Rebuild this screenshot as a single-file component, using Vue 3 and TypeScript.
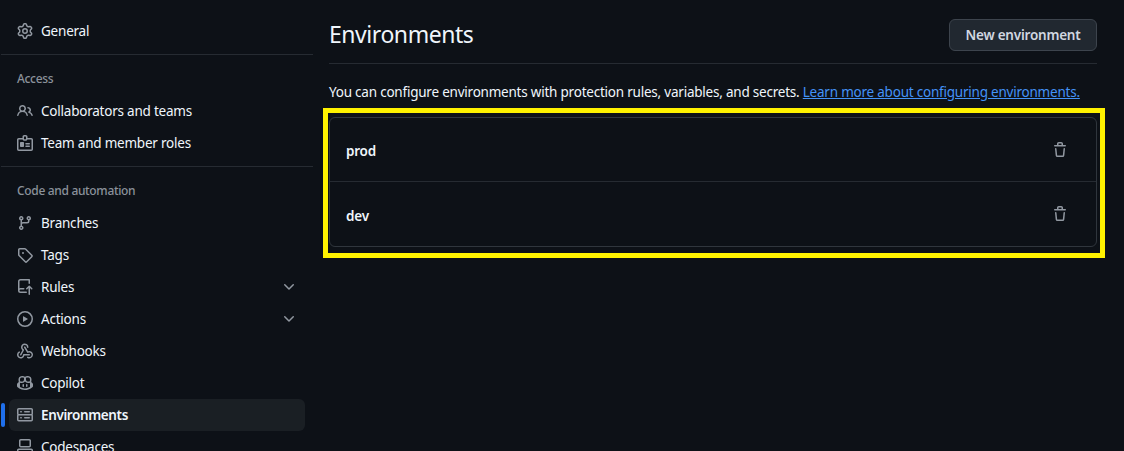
<script setup lang="ts">
interface NavItem {
  label: string;
  icon: string[];
  active?: boolean;
  expandable?: boolean;
}

const chevronDown =
  'M12.78 5.22a.749.749 0 0 1 0 1.06l-4.25 4.25a.749.749 0 0 1-1.06 0L3.22 6.28a.749.749 0 1 1 1.06-1.06L8 8.939l3.72-3.719a.749.749 0 0 1 1.06 0Z';
const trash =
  'M11 1.75V3h2.25a.75.75 0 0 1 0 1.5H2.75a.75.75 0 0 1 0-1.5H5V1.75C5 .784 5.784 0 6.75 0h2.5C10.216 0 11 .784 11 1.75ZM4.496 6.675l.66 6.6a.25.25 0 0 0 .249.225h5.19a.25.25 0 0 0 .249-.225l.66-6.6a.75.75 0 0 1 1.492.149l-.66 6.6A1.748 1.748 0 0 1 10.595 15h-5.19a1.75 1.75 0 0 1-1.741-1.575l-.66-6.6a.75.75 0 1 1 1.492-.15ZM6.5 1.75V3h3V1.75a.25.25 0 0 0-.25-.25h-2.5a.25.25 0 0 0-.25.25Z';

const general: NavItem = {
  label: 'General',
  icon: [
    'M8 0a8.2 8.2 0 0 1 .701.031C9.444.095 9.99.645 10.16 1.29l.288 1.107c.018.066.079.158.212.224.231.114.454.243.668.386.123.082.233.09.299.071l1.103-.303c.644-.176 1.392.021 1.82.63.27.385.506.792.704 1.218.315.675.111 1.422-.364 1.891l-.814.806c-.049.048-.098.147-.088.294.016.257.016.515 0 .772-.01.147.038.246.088.294l.814.806c.475.469.679 1.216.364 1.891a7.977 7.977 0 0 1-.704 1.217c-.428.61-1.176.807-1.82.63l-1.102-.302c-.067-.019-.177-.011-.3.071a5.909 5.909 0 0 1-.668.386c-.133.066-.194.158-.211.224l-.29 1.106c-.168.646-.715 1.196-1.458 1.26a8.006 8.006 0 0 1-1.402 0c-.743-.064-1.289-.614-1.458-1.26l-.289-1.106c-.018-.066-.079-.158-.212-.224a5.738 5.738 0 0 1-.668-.386c-.123-.082-.233-.09-.299-.071l-1.103.303c-.644.176-1.392-.021-1.82-.63a8.12 8.12 0 0 1-.704-1.218c-.315-.675-.111-1.422.363-1.891l.815-.806c.05-.048.098-.147.088-.294a6.214 6.214 0 0 1 0-.772c.01-.147-.038-.246-.088-.294l-.815-.806C.635 6.045.431 5.298.746 4.623a7.92 7.92 0 0 1 .704-1.217c.428-.61 1.176-.807 1.82-.63l1.102.302c.067.019.177.011.3-.071.214-.143.437-.272.668-.386.133-.066.194-.158.211-.224l.29-1.106C6.009.645 6.556.095 7.299.03 7.53.01 7.764 0 8 0Zm-.571 1.525c-.036.003-.108.036-.137.146l-.289 1.105c-.147.561-.549.967-.998 1.189-.173.086-.34.183-.5.29-.417.278-.97.423-1.529.27l-1.103-.303c-.109-.03-.175.016-.195.045-.22.312-.412.644-.573.99-.014.031-.021.11.059.19l.815.806c.411.406.562.957.53 1.456a4.709 4.709 0 0 0 0 .582c.032.499-.119 1.05-.53 1.456l-.815.806c-.081.08-.073.159-.059.19.162.346.353.677.573.989.02.03.085.076.195.046l1.102-.303c.56-.153 1.113-.008 1.53.27.161.107.328.204.501.29.447.222.85.629.997 1.189l.289 1.105c.029.109.101.143.137.146a6.6 6.6 0 0 0 1.142 0c.036-.003.108-.036.137-.146l.289-1.105c.147-.561.549-.967.998-1.189.173-.086.34-.183.5-.29.417-.278.97-.423 1.529-.27l1.103.303c.109.029.175-.016.195-.045.22-.313.411-.644.573-.99.014-.031.021-.11-.059-.19l-.815-.806c-.411-.406-.562-.957-.53-1.456a4.709 4.709 0 0 0 0-.582c-.032-.499.119-1.05.53-1.456l.815-.806c.081-.08.073-.159.059-.19a6.464 6.464 0 0 0-.573-.989c-.02-.03-.085-.076-.195-.046l-1.102.303c-.56.153-1.113.008-1.53-.27a4.44 4.44 0 0 0-.501-.29c-.447-.222-.85-.629-.997-1.189l-.289-1.105c-.029-.11-.101-.143-.137-.146a6.6 6.6 0 0 0-1.142 0ZM11 8a3 3 0 1 1-6 0 3 3 0 0 1 6 0ZM9.5 8a1.5 1.5 0 1 0-3.001.001A1.5 1.5 0 0 0 9.5 8Z',
  ],
};

const accessItems: NavItem[] = [
  {
    label: 'Collaborators and teams',
    icon: [
      'M2 5.5a3.5 3.5 0 1 1 5.898 2.549 5.508 5.508 0 0 1 3.034 4.084.75.75 0 1 1-1.482.235 4 4 0 0 0-7.9 0 .75.75 0 0 1-1.482-.236A5.507 5.507 0 0 1 3.102 8.05 3.493 3.493 0 0 1 2 5.5ZM11 4a3.001 3.001 0 0 1 2.22 5.018 5.01 5.01 0 0 1 2.56 3.012.749.749 0 0 1-.885.954.752.752 0 0 1-.549-.514 3.507 3.507 0 0 0-2.522-2.372.75.75 0 0 1-.574-.73v-.352a.75.75 0 0 1 .416-.672A1.5 1.5 0 0 0 11 5.5.75.75 0 0 1 11 4Zm-5.5-.5a2 2 0 1 0-.001 3.999A2 2 0 0 0 5.5 3.5Z',
    ],
  },
  {
    label: 'Team and member roles',
    icon: [
      'M1.75 3H5.5V1.75C5.5.784 6.284 0 7.25 0h1.5c.966 0 1.75.784 1.75 1.75V3h3.75c.966 0 1.75.784 1.75 1.75v9.5A1.75 1.75 0 0 1 14.25 16H1.75A1.75 1.75 0 0 1 0 14.25v-9.5C0 3.784.784 3 1.75 3ZM1.5 4.75v9.5c0 .138.112.25.25.25h12.5a.25.25 0 0 0 .25-.25v-9.5a.25.25 0 0 0-.25-.25H10.4a1.75 1.75 0 0 1-1.65 1.25h-1.5A1.75 1.75 0 0 1 5.6 4.5H1.75a.25.25 0 0 0-.25.25ZM7 1.75v2.25c0 .138.112.25.25.25h1.5A.25.25 0 0 0 9 4V1.75a.25.25 0 0 0-.25-.25h-1.5a.25.25 0 0 0-.25.25Z',
      'M3 7.75A.75.75 0 0 1 3.75 7h2.5a.75.75 0 0 1 .75.75v3.5a.75.75 0 0 1-.75.75h-2.5a.75.75 0 0 1-.75-.75ZM9 8h3.25a.75.75 0 0 1 0 1.5H9A.75.75 0 0 1 9 8Zm0 2.5h3.25a.75.75 0 0 1 0 1.5H9a.75.75 0 0 1 0-1.5Z',
    ],
  },
];

const automationItems: NavItem[] = [
  {
    label: 'Branches',
    icon: [
      'M9.5 3.25a2.25 2.25 0 1 1 3 2.122V6A2.5 2.5 0 0 1 10 8.5H6a1 1 0 0 0-1 1v1.128a2.251 2.251 0 1 1-1.5 0V5.372a2.25 2.25 0 1 1 1.5 0v1.836A2.493 2.493 0 0 1 6 7h4a1 1 0 0 0 1-1v-.628A2.25 2.25 0 0 1 9.5 3.25Zm-6 0a.75.75 0 1 0 1.5 0 .75.75 0 0 0-1.5 0Zm8.25-.75a.75.75 0 1 0 0 1.5.75.75 0 0 0 0-1.5ZM4.25 12a.75.75 0 1 0 0 1.5.75.75 0 0 0 0-1.5Z',
    ],
  },
  {
    label: 'Tags',
    icon: [
      'M1 7.775V2.75C1 1.784 1.784 1 2.75 1h5.025c.464 0 .91.184 1.238.513l6.25 6.25a1.75 1.75 0 0 1 0 2.474l-5.026 5.026a1.75 1.75 0 0 1-2.474 0l-6.25-6.25A1.752 1.752 0 0 1 1 7.775Zm1.5 0c0 .066.026.13.073.177l6.25 6.25a.25.25 0 0 0 .354 0l5.025-5.025a.25.25 0 0 0 0-.354l-6.25-6.25a.25.25 0 0 0-.177-.073H2.75a.25.25 0 0 0-.25.25ZM6 5a1 1 0 1 1 0 2 1 1 0 0 1 0-2Z',
    ],
  },
  {
    label: 'Rules',
    expandable: true,
    icon: [
      'M1 2.5A2.5 2.5 0 0 1 3.5 0h8.75a.75.75 0 0 1 .75.75v3.5a.75.75 0 0 1-1.5 0V1.5h-8a1 1 0 0 0-1 1v6.708A2.493 2.493 0 0 1 3.5 9h3.25a.75.75 0 0 1 0 1.5H3.5a1 1 0 0 0 0 2h5.75a.75.75 0 0 1 0 1.5H3.5A2.5 2.5 0 0 1 1 11.5Zm13.23 7.79h-.001l-1.224-1.224v6.184a.75.75 0 0 1-1.5 0V9.066L10.28 10.29a.75.75 0 0 1-1.06-1.061l2.505-2.504a.75.75 0 0 1 1.06 0L15.29 9.23a.751.751 0 0 1-.018 1.042.751.751 0 0 1-1.042.018Z',
    ],
  },
  {
    label: 'Actions',
    expandable: true,
    icon: [
      'M8 0a8 8 0 1 1 0 16A8 8 0 0 1 8 0ZM1.5 8a6.5 6.5 0 1 0 13 0 6.5 6.5 0 0 0-13 0Zm4.879-2.773 4.264 2.559a.25.25 0 0 1 0 .428l-4.264 2.559A.25.25 0 0 1 6 10.559V5.442a.25.25 0 0 1 .379-.215Z',
    ],
  },
  {
    label: 'Webhooks',
    icon: [
      'M5.5 4.25a2.25 2.25 0 0 1 4.5 0 .75.75 0 0 0 1.5 0 3.75 3.75 0 1 0-6.14 2.889l-2.272 4.258a.75.75 0 0 0 1.324.706L7 7.25a.75.75 0 0 0-.309-1.015A2.25 2.25 0 0 1 5.5 4.25Z',
      'M7.364 3.607a.75.75 0 0 1 1.03.257l2.608 4.349a3.75 3.75 0 1 1-.628 6.785.75.75 0 0 1 .752-1.299 2.25 2.25 0 1 0-.033-3.88.75.75 0 0 1-1.03-.256L7.107 4.636a.75.75 0 0 1 .257-1.03Z',
      'M2.9 8.776A.75.75 0 0 1 2.625 9.8 2.25 2.25 0 1 0 6 11.75a.75.75 0 0 1 .75-.751h5.5a.75.75 0 0 1 0 1.5H7.425a3.751 3.751 0 1 1-5.55-3.998.75.75 0 0 1 1.024.274Z',
    ],
  },
  {
    label: 'Copilot',
    icon: [
      'M7.998 15.035c-4.562 0-7.873-2.914-7.998-3.749V9.338c.085-.628.677-1.686 1.588-2.065.013-.07.024-.143.036-.218.029-.183.06-.384.126-.612-.201-.508-.254-1.084-.254-1.656 0-.87.128-1.769.693-2.484.579-.733 1.494-1.124 2.724-1.261 1.206-.134 2.262.034 2.944.765.05.053.096.108.139.165.044-.057.094-.112.143-.165.682-.731 1.738-.899 2.944-.765 1.23.137 2.145.528 2.724 1.261.566.715.693 1.614.693 2.484 0 .572-.053 1.148-.254 1.656.066.228.098.429.126.612.012.076.024.148.037.218.924.385 1.522 1.471 1.591 2.095v1.872c0 .766-3.351 3.795-8.002 3.795Zm0-1.485c2.28 0 4.584-1.11 5.002-1.433V7.862l-.023-.116c-.49.21-1.075.291-1.727.291-1.146 0-2.059-.327-2.71-.991A3.222 3.222 0 0 1 8 6.303a3.24 3.24 0 0 1-.544.743c-.65.664-1.563.991-2.71.991-.652 0-1.236-.081-1.727-.291l-.023.116v4.255c.419.323 2.722 1.433 5.002 1.433ZM6.762 2.83c-.193-.206-.637-.413-1.682-.297-1.019.113-1.479.404-1.713.7-.247.312-.369.789-.369 1.554 0 .793.129 1.171.308 1.371.162.181.519.379 1.442.379.853 0 1.339-.235 1.638-.54.315-.322.527-.827.617-1.553.117-.935-.037-1.395-.241-1.614Zm4.155-.297c-1.044-.116-1.488.091-1.681.297-.204.219-.359.679-.242 1.614.091.726.303 1.231.618 1.553.299.305.784.54 1.638.54.922 0 1.28-.198 1.442-.379.179-.2.308-.578.308-1.371 0-.765-.123-1.242-.37-1.554-.233-.296-.693-.587-1.713-.7Z',
      'M6.25 9.037a.75.75 0 0 1 .75.75v1.501a.75.75 0 0 1-1.5 0V9.787a.75.75 0 0 1 .75-.75Zm4.25.75v1.501a.75.75 0 0 1-1.5 0V9.787a.75.75 0 0 1 1.5 0Z',
    ],
  },
  {
    label: 'Environments',
    active: true,
    icon: [
      'M1.75 1h12.5c.966 0 1.75.784 1.75 1.75v4c0 .372-.116.717-.314 1 .198.283.314.628.314 1v4a1.75 1.75 0 0 1-1.75 1.75H1.75A1.75 1.75 0 0 1 0 12.75v-4c0-.372.116-.717.314-1a1.739 1.739 0 0 1-.314-1v-4C0 1.784.784 1 1.75 1ZM1.5 2.75v4c0 .138.112.25.25.25h12.5a.25.25 0 0 0 .25-.25v-4a.25.25 0 0 0-.25-.25H1.75a.25.25 0 0 0-.25.25Zm.25 5.75a.25.25 0 0 0-.25.25v4c0 .138.112.25.25.25h12.5a.25.25 0 0 0 .25-.25v-4a.25.25 0 0 0-.25-.25ZM7 4.75A.75.75 0 0 1 7.75 4h4.5a.75.75 0 0 1 0 1.5h-4.5A.75.75 0 0 1 7 4.75ZM7.75 10h4.5a.75.75 0 0 1 0 1.5h-4.5a.75.75 0 0 1 0-1.5ZM3 4.75A.75.75 0 0 1 3.75 4h.5a.75.75 0 0 1 0 1.5h-.5A.75.75 0 0 1 3 4.75ZM3.75 10h.5a.75.75 0 0 1 0 1.5h-.5a.75.75 0 0 1 0-1.5Z',
    ],
  },
  {
    label: 'Codespaces',
    icon: [
      'M0 11.25c0-.966.784-1.75 1.75-1.75h12.5c.966 0 1.75.784 1.75 1.75v3A1.75 1.75 0 0 1 14.25 16H1.75A1.75 1.75 0 0 1 0 14.25Zm2-9.5C2 .784 2.784 0 3.75 0h8.5C13.216 0 14 .784 14 1.75v5a1.75 1.75 0 0 1-1.75 1.75h-8.5A1.75 1.75 0 0 1 2 6.75Zm1.75-.25a.25.25 0 0 0-.25.25v5c0 .138.112.25.25.25h8.5a.25.25 0 0 0 .25-.25v-5a.25.25 0 0 0-.25-.25Zm-2 9.5a.25.25 0 0 0-.25.25v3c0 .138.112.25.25.25h12.5a.25.25 0 0 0 .25-.25v-3a.25.25 0 0 0-.25-.25Z',
      'M7 12.75a.75.75 0 0 1 .75-.75h4.5a.75.75 0 0 1 0 1.5h-4.5a.75.75 0 0 1-.75-.75Zm-4 0a.75.75 0 0 1 .75-.75h.5a.75.75 0 0 1 0 1.5h-.5a.75.75 0 0 1-.75-.75Z',
    ],
  },
];

const groups = [
  { heading: 'Access', items: accessItems },
  { heading: 'Code and automation', items: automationItems },
];

const environments = ['prod', 'dev'];
</script>

<template>
  <div class="page">
    <nav class="sidebar">
      <a class="nav-item">
        <svg class="icon" viewBox="0 0 16 16" width="16" height="16">
          <path v-for="d in general.icon" :key="d" :d="d" />
        </svg>
        <span class="nav-label">{{ general.label }}</span>
      </a>

      <section v-for="group in groups" :key="group.heading" class="nav-group">
        <h3 class="nav-heading">{{ group.heading }}</h3>
        <a
          v-for="item in group.items"
          :key="item.label"
          class="nav-item"
          :class="{ 'nav-item--active': item.active }"
        >
          <svg class="icon" viewBox="0 0 16 16" width="16" height="16">
            <path v-for="d in item.icon" :key="d" :d="d" />
          </svg>
          <span class="nav-label">{{ item.label }}</span>
          <svg v-if="item.expandable" class="icon chevron" viewBox="0 0 16 16" width="16" height="16">
            <path :d="chevronDown" />
          </svg>
        </a>
      </section>
    </nav>

    <main class="content">
      <header class="title-bar">
        <h2 class="title">Environments</h2>
        <button class="new-button" type="button">New environment</button>
      </header>

      <p class="intro">
        You can configure environments with protection rules, variables, and secrets.
        <a class="intro-link">Learn more about configuring environments.</a>
      </p>

      <div class="highlight">
        <ul class="env-list">
          <li v-for="env in environments" :key="env" class="env-row">
            <span class="env-name">{{ env }}</span>
            <svg class="icon" viewBox="0 0 16 16" width="16" height="16">
              <path :d="trash" />
            </svg>
          </li>
        </ul>
      </div>
    </main>
  </div>
</template>

<style>
html,
body {
  margin: 0;
  background: #0d1117;
  overflow: hidden;
}
</style>

<style scoped>
.page {
  display: flex;
  height: 451px;
  overflow: hidden;
  background: #0d1117;
  color: #f0f6fc;
  font-family: "Noto Sans", "Open Sans", sans-serif;
  font-size: 13.5px;
  letter-spacing: -0.22px;
}

.sidebar {
  flex: none;
  box-sizing: border-box;
  width: 312px;
  margin-left: 1px;
  padding-top: 15px;
}

.nav-group {
  margin-top: 7px;
  border-top: 1px solid #262b32;
  padding-top: 16px;
}

.nav-heading {
  margin: 0 0 8px;
  padding-left: 16px;
  height: 16px;
  font-size: 12px;
  line-height: 16px;
  font-weight: 500;
  color: #8b929b;
  letter-spacing: -0.33px;
}

.nav-item {
  position: relative;
  display: flex;
  align-items: center;
  gap: 8px;
  box-sizing: border-box;
  width: 296px;
  height: 32px;
  margin-left: 8px;
  padding: 0 8px;
  border-radius: 6px;
}

.nav-item--active {
  background: #1a1f24;
  font-weight: 600;
  letter-spacing: -0.38px;
}

.nav-item--active::before {
  content: "";
  position: absolute;
  left: -8px;
  top: 4px;
  width: 4px;
  height: 24px;
  border-radius: 6px;
  background: #1f6feb;
}

.nav-label {
  flex: 1;
  white-space: nowrap;
  line-height: 18px;
  margin-top: -1px;
}

.icon {
  flex: none;
  fill: #9198a1;
}

.content {
  flex: none;
  width: 768px;
  margin-left: 16px;
}

.title-bar {
  display: flex;
  align-items: center;
  justify-content: space-between;
  box-sizing: border-box;
  height: 64px;
  padding-top: 19px;
  padding-bottom: 12px;
  border-bottom: 1px solid #262b32;
}

.title {
  margin: -3px 0 0;
  font-size: 23px;
  line-height: 30px;
  font-weight: 400;
  letter-spacing: -0.45px;
}

.new-button {
  box-sizing: border-box;
  height: 32px;
  width: 148px;
  padding: 0;
  border: 1px solid #3d444d;
  border-radius: 6px;
  background: #212830;
  color: #d1d7e0;
  font: inherit;
  font-weight: 600;
  letter-spacing: inherit;
}

.intro {
  margin: 18px 0 0;
  line-height: 20px;
  white-space: nowrap;
}

.intro-link {
  color: #4493f8;
  text-decoration: underline;
}

.highlight {
  margin: 6px -8px 0 -6px;
  padding: 4px 3px 6px 1px;
  border: 5px solid #fff200;
}

.env-list {
  list-style: none;
  margin: 0;
  padding: 0;
  border: 1px solid #30363d;
  border-radius: 6px;
}

.env-row {
  display: flex;
  align-items: center;
  justify-content: space-between;
  height: 64px;
  padding: 0 28px 0 16px;
}

.env-row:first-child {
  height: 63px;
}

.env-row + .env-row {
  border-top: 1px solid #262b32;
}

.env-name {
  font-weight: 600;
  margin-top: 3px;
}
</style>
